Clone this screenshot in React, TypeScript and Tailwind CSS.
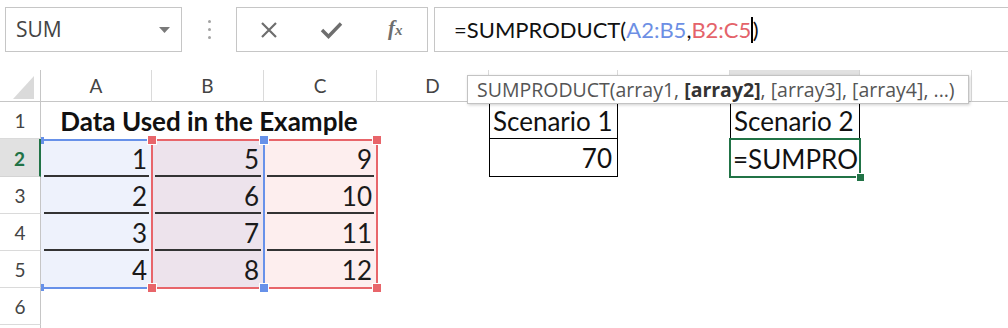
import React from 'react';

const COLS = ['A', 'B', 'C', 'D', 'E', 'F', 'G', 'H', 'I'];

const NumCell = ({ v, bg, line }: { v: number; bg: string; line: boolean }) => (
  <div className={`flex flex-col ${bg}`}>
    <div className="flex flex-1 items-end justify-end pr-[5px] pb-[3px] text-[26px] leading-none text-[#1a1a1a]">
      {v}
    </div>
    <div className={line ? 'mx-[3px] h-[2px] bg-[#333]' : 'h-[2px]'} />
  </div>
);

const RowHead = ({ n, active }: { n: number; active?: boolean }) => (
  <div
    className={
      active
        ? 'flex items-center justify-center border-b border-b-[#d4d4d4] border-r-2 border-r-[#217346] bg-[#e1e1e1] pt-[3px] text-[19px] font-bold text-[#217346]'
        : 'flex items-center justify-center border-b border-b-[#dadada] border-r border-r-[#c6c6c6] pt-[3px] text-[19px] text-[#444]'
    }
  >
    {n}
  </div>
);

const data = [
  [1, 5, 9],
  [2, 6, 10],
  [3, 7, 11],
  [4, 8, 12],
];

export default function App() {
  return (
    <div className="relative h-[328px] w-[1008px] overflow-hidden bg-white font-['Lato',sans-serif]">
      {/* formula bar */}
      <div className="flex h-[70px] items-start pt-[7px] font-['Open_Sans',sans-serif]">
        <div className="ml-[5px] flex h-[45px] w-[177px] items-center justify-between border border-[#c6c6c6] pl-[10px] pr-[11px]">
          <span className="text-[21px] text-[#444]">SUM</span>
          <svg width="11" height="6" viewBox="0 0 11 6">
            <polygon points="0,0 11,0 5.5,6" fill="#7a7a7a" />
          </svg>
        </div>
        <div className="flex h-[45px] w-[54px] flex-col items-center justify-center gap-[5px]">
          <div className="h-[3px] w-[3px] rounded-full bg-[#a3a3a3]" />
          <div className="h-[3px] w-[3px] rounded-full bg-[#a3a3a3]" />
          <div className="h-[3px] w-[3px] rounded-full bg-[#a3a3a3]" />
        </div>
        <div className="grid h-[45px] w-[192px] grid-cols-3 border border-[#c6c6c6]">
          <div className="flex items-center justify-center">
            <svg width="18" height="16" viewBox="0 0 18 16">
              <path d="M2 1 L16 15 M16 1 L2 15" stroke="#6e6e6e" strokeWidth="2.2" />
            </svg>
          </div>
          <div className="flex items-center justify-center">
            <svg width="23" height="18" viewBox="0 0 23 18">
              <path d="M2 9 L8.5 15.5 L21 2.5" stroke="#6e6e6e" strokeWidth="3.4" fill="none" />
            </svg>
          </div>
          <div className="flex items-center justify-center">
            <span className="flex items-baseline pb-[2px] font-['Liberation_Serif',serif] font-bold italic leading-none text-[#6e6e6e]">
              <span className="text-[21px]">f</span>
              <span className="text-[15px]">x</span>
            </span>
          </div>
        </div>
        <div className="ml-[6px] flex h-[45px] flex-1 items-center border-y border-l border-[#c6c6c6] pl-[19px] font-['Lato',sans-serif] text-[22px] text-[#111]">
          <span>=SUMPRODUCT(</span>
          <span className="text-[#6d8fe4]">A2:B5</span>
          <span>,</span>
          <span className="text-[#e4636a]">B2:C5</span>
          <span className="inline-block h-[26px] w-[1.5px] bg-black" />
          <span>)</span>
        </div>
      </div>

      {/* sheet */}
      <div className="grid grid-cols-[41px_111px_112px_113px_112px_129px_112px_130px_112px_112px] grid-rows-[32px_37px_38px_37px_37px_37px_37px_37px]">
        {/* column headers */}
        <div className="relative border-b border-r border-[#c6c6c6]">
          <svg className="absolute right-[6px] bottom-[2px]" width="21" height="23" viewBox="0 0 21 23">
            <polygon points="21,0 21,23 0,23" fill="#dadada" />
          </svg>
        </div>
        {COLS.map((c) =>
          c === 'G' ? (
            <div key={c} className="flex items-center justify-center border-b-2 border-r border-b-[#217346] border-r-[#d4d4d4] bg-[#e1e1e1] text-[19px] font-bold text-[#217346]">
              {c}
            </div>
          ) : (
            <div key={c} className="flex items-center justify-center border-b border-r border-b-[#c6c6c6] border-r-[#dadada] pt-[2px] text-[19px] text-[#444]">
              {c}
            </div>
          )
        )}

        {/* row 1 */}
        <RowHead n={1} />
        <div className="col-span-3 flex items-end justify-center pb-[5px] text-[26px] font-bold leading-none text-[#111]">
          Data Used in the Example
        </div>
        <div />
        <div className="flex items-end border border-black pb-[4px] pl-[3px] text-[26px] leading-none text-[#111]">
          Scenario 1
        </div>
        <div />
        <div className="flex items-end border-x border-t border-black pb-[5px] pl-[3px] text-[26px] leading-none text-[#111]">
          Scenario 2
        </div>
        <div />
        <div />

        {/* rows 2-5 */}
        {data.map((r, i) => (
          <React.Fragment key={i}>
            <RowHead n={i + 2} active={i === 0} />
            <NumCell v={r[0]} bg="bg-[#eef2fc]" line={i < 3} />
            <NumCell v={r[1]} bg="bg-[#ede3ec]" line={i < 3} />
            <NumCell v={r[2]} bg="bg-[#fdeeee]" line={i < 3} />
            <div />
            {i === 0 ? (
              <div className="flex items-end justify-end border-x border-b border-black pb-[5px] pr-[5px] text-[26px] leading-none text-[#111]">
                70
              </div>
            ) : (
              <div />
            )}
            <div />
            {i === 0 ? (
              <div className="relative flex items-end overflow-visible text-[26px] leading-none text-[#111]">
                <div className="w-full overflow-hidden whitespace-nowrap pb-[5px] pl-[3px]">=SUMPRODUCT(A2:B5,B2:C5)</div>
                <div className="absolute -inset-[1px] border-2 border-[#217346]" />
                <div className="absolute -right-[4px] -bottom-[4px] h-[7px] w-[7px] bg-[#217346] ring-1 ring-white" />
              </div>
            ) : (
              <div />
            )}
            <div />
            <div />
          </React.Fragment>
        ))}

        {/* rows 6-7 */}
        {[6, 7].map((n) => (
          <React.Fragment key={n}>
            <RowHead n={n} />
            {COLS.map((c) => (
              <div key={c} />
            ))}
          </React.Fragment>
        ))}
      </div>

      {/* range highlight A2:B5 (blue) and B2:C5 (red) */}
      <div className="absolute left-[43px] top-[139px] h-[2px] w-[106px] bg-[#6791e9]" />
      <div className="absolute left-[43px] top-[287px] h-[2px] w-[106px] bg-[#6791e9]" />
      <div className="absolute left-[152px] top-[139px] h-[2px] w-[224px] bg-[#e8656a]" />
      <div className="absolute left-[152px] top-[287px] h-[2px] w-[224px] bg-[#e8656a]" />
      <div className="absolute left-[151px] top-[139px] h-[150px] w-[2px] bg-[#e8656a]" />
      <div className="absolute left-[263px] top-[139px] h-[150px] w-[2px] bg-[#6791e9]" />
      <div className="absolute left-[376px] top-[139px] h-[150px] w-[2px] bg-[#e8656a]" />
      <div className="absolute left-[41px] top-[137px] h-[7px] w-[3px] bg-[#6791e9]" />
      <div className="absolute left-[41px] top-[284px] h-[7px] w-[3px] bg-[#6791e9]" />
      <div className="absolute left-[148px] top-[136px] h-[8px] w-[8px] bg-[#e8656a] ring-1 ring-white" />
      <div className="absolute left-[148px] top-[284px] h-[8px] w-[8px] bg-[#e8656a] ring-1 ring-white" />
      <div className="absolute left-[260px] top-[136px] h-[8px] w-[8px] bg-[#6791e9] ring-1 ring-white" />
      <div className="absolute left-[260px] top-[284px] h-[8px] w-[8px] bg-[#6791e9] ring-1 ring-white" />
      <div className="absolute left-[373px] top-[136px] h-[8px] w-[8px] bg-[#e8656a] ring-1 ring-white" />
      <div className="absolute left-[373px] top-[284px] h-[8px] w-[8px] bg-[#e8656a] ring-1 ring-white" />

      {/* function tooltip */}
      <div className="absolute left-[467px] top-[75px] flex h-[29px] w-[502px] items-center whitespace-nowrap border border-[#c3c3c3] bg-white pl-[9px] font-['Open_Sans',sans-serif] text-[19.5px] text-[#555] shadow-[1px_1px_3px_rgba(0,0,0,0.2)]">
        <span>
          SUMPRODUCT(array1, <span className="font-bold text-[#333]">[array2]</span>, [array3], [array4], ...)
        </span>
      </div>
    </div>
  );
}
